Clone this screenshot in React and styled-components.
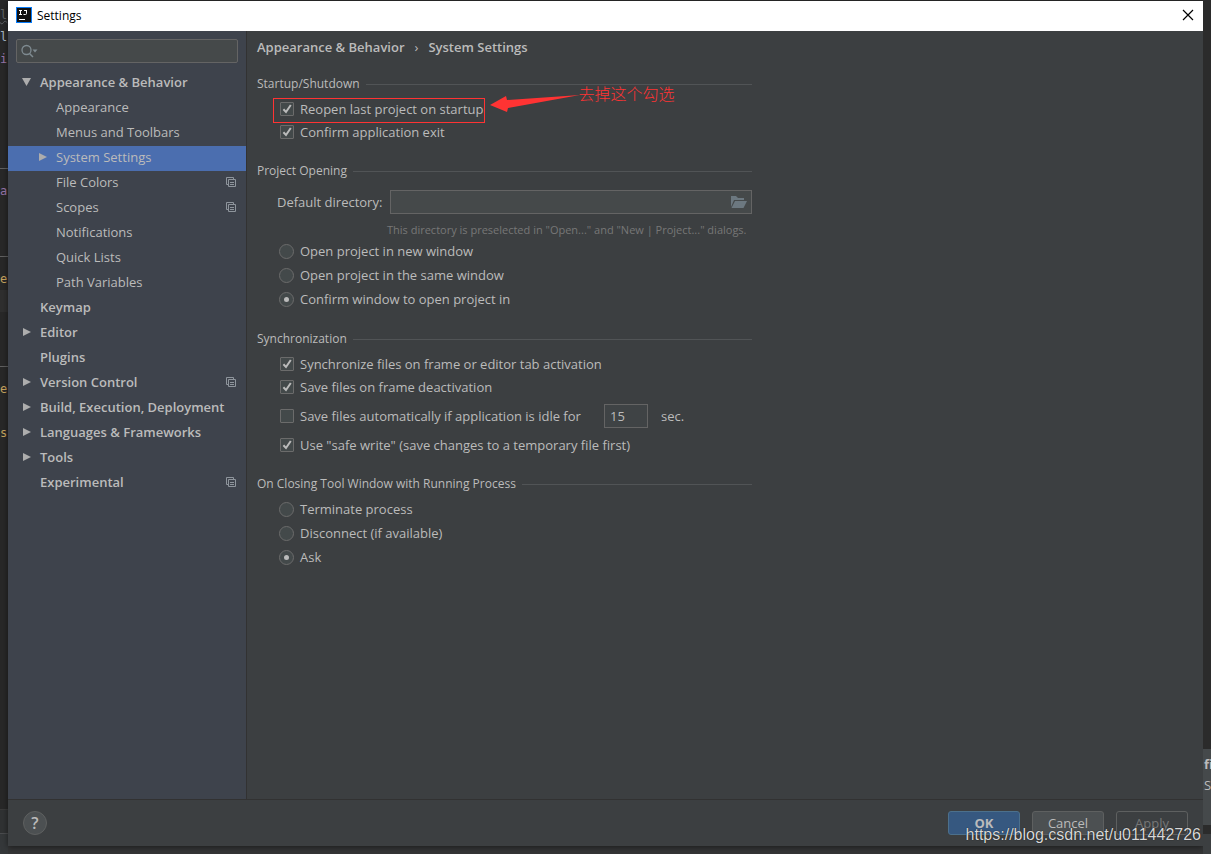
import { useState } from "react"
import styled, { createGlobalStyle, css } from "styled-components"

const editorLines = {
    0: { text: "l", color: "#606366", wavy: true },
    1: { text: "l", color: "#A9B7C6" },
    2: { text: "i", color: "#9876AA" },
    7: { separator: true },
    8: { text: "a", color: "#9876AA" },
    11: { separator: true },
    12: { text: "e", color: "#C9A55F" },
    13: { current: true },
    16: { separator: true },
    17: { text: "e", color: "#C9A55F" },
    19: { text: "s", color: "#C9A55F" }
}

const tree = [
    { name: "Appearance & Behavior", arrow: "open" },
    { name: "Appearance", child: true },
    { name: "Menus and Toolbars", child: true },
    { name: "System Settings", child: true, arrow: "closed" },
    { name: "File Colors", child: true, project: true },
    { name: "Scopes", child: true, project: true },
    { name: "Notifications", child: true },
    { name: "Quick Lists", child: true },
    { name: "Path Variables", child: true },
    { name: "Keymap" },
    { name: "Editor", arrow: "closed" },
    { name: "Plugins" },
    { name: "Version Control", arrow: "closed", project: true },
    { name: "Build, Execution, Deployment", arrow: "closed" },
    { name: "Languages & Frameworks", arrow: "closed" },
    { name: "Tools", arrow: "closed" },
    { name: "Experimental", project: true }
]

function CheckOption({ children, defaultChecked }) {
    return (
        <CheckLabel>
            <CheckBox>
                <input type="checkbox" defaultChecked={defaultChecked} />
                <svg width="14" height="14" viewBox="0 0 14 14" fill="none">
                    <path d="M3.4 7.2L6 10L10.8 3" stroke="#BBBBBB" strokeWidth="2" />
                </svg>
            </CheckBox>
            {children}
        </CheckLabel>
    )
}

function RadioGroup({ name, options, selected }) {
    return options.map(o =>
        <RadioLabel key={o}>
            <Radio type="radio" name={name} defaultChecked={o === selected} />
            {o}
        </RadioLabel>
    )
}

function Arrow({ state }) {
    return (
        <ArrowSlot>
            {state &&
                <svg width="10" height="10" viewBox="0 0 10 10" fill="#ADADAD">
                    {state === "open" ? <path d="M0 1H9L4.500 9Z" /> : <path d="M1 1V9L9 5Z" />}
                </svg>}
        </ArrowSlot>
    )
}

function ProjectIcon() {
    return (
        <svg width="10" height="10" viewBox="0 0 10 10" fill="none" stroke="#8E959C">
            <path d="M2 7.500H0.500V0.500H7.500V2" />
            <path d="M2.500 2.500H9.500V9.500H2.500Z" />
            <path d="M4 5.500H8M4 7.500H8" />
        </svg>
    )
}

export default function App() {
    const [active, setActive] = useState("System Settings");

    return (
        <Desktop>
            <GlobalStyle />
            <EditorEdge aria-hidden="true">
                {Array.from({ length: 20 }, (_, i) => {
                    const line = editorLines[i] || {};
                    return (
                        <CodeLine key={i} $color={line.color} $current={line.current} $wavy={line.wavy}>
                            {line.separator ? <hr /> : line.text}
                        </CodeLine>
                    )
                })}
                <StatusBars />
            </EditorEdge>

            <Dialog>
                <TitleBar>
                    <svg width="16" height="16" viewBox="0 0 16 16">
                        <rect width="16" height="16" fill="#087CFA" />
                        <rect x="1" y="1" width="14" height="14" fill="#111111" />
                        <path d="M3 3.500H6M4.500 3V8M3 7.500H6M8 3.500H11M10.500 3V6.500Q10.500 7.500 9.500 7.500H7.500M3 12.500H9" stroke="#FFFFFF" fill="none" />
                    </svg>
                    <h1>Settings</h1>
                    <CloseButton aria-label="Close">
                        <svg width="12" height="12" viewBox="0 0 12 12">
                            <path d="M1 1L11 11M11 1L1 11" stroke="#000000" strokeWidth="1.200" />
                        </svg>
                    </CloseButton>
                </TitleBar>

                <Body>
                    <Sidebar>
                        <Search>
                            <svg width="18" height="14" viewBox="0 0 18 14" fill="none">
                                <circle cx="5.500" cy="6" r="4.500" stroke="#7F8B91" strokeWidth="1.300" />
                                <path d="M8.500 9.500L12 13" stroke="#7F8B91" strokeWidth="1.500" />
                                <path d="M11.500 5.500H16.500L14 8.500Z" fill="#7F8B91" />
                            </svg>
                            <input type="text" aria-label="Search settings" />
                        </Search>
                        <nav>
                            {tree.map(t =>
                                <TreeRow key={t.name} $child={t.child} $active={t.name === active} onClick={() => setActive(t.name)}>
                                    <Arrow state={t.arrow} />
                                    <span>{t.name}</span>
                                    {t.project && <ProjectIcon />}
                                </TreeRow>
                            )}
                        </nav>
                    </Sidebar>

                    <Content>
                        <Breadcrumb>
                            <span>Appearance &amp; Behavior</span>
                            <i>›</i>
                            <span>System Settings</span>
                        </Breadcrumb>

                        <Section>
                            <SectionTitle>Startup/Shutdown</SectionTitle>
                            <Options>
                                <Marked>
                                    <CheckOption defaultChecked>Reopen last project on startup</CheckOption>
                                    <Note>
                                        <svg width="90" height="20" viewBox="0 0 90 20">
                                            <path d="M0 10L16 1L17 5L90 0L18 13L17 17Z" fill="#FF3333" />
                                        </svg>
                                        <span lang="zh">去掉这个勾选</span>
                                    </Note>
                                </Marked>
                                <CheckOption defaultChecked>Confirm application exit</CheckOption>
                            </Options>
                        </Section>

                        <Section>
                            <SectionTitle>Project Opening</SectionTitle>
                            <DirectoryRow>
                                <label htmlFor="directory">Default directory:</label>
                                <DirectoryField>
                                    <input id="directory" type="text" />
                                    <button aria-label="Browse">
                                        <svg width="16" height="12" viewBox="0 0 16 12" fill="#6C7880">
                                            <path d="M0 11V0H5L7 2H13V4H3Z" />
                                            <path d="M4 5H16L12.500 12H0.500Z" />
                                        </svg>
                                    </button>
                                </DirectoryField>
                            </DirectoryRow>
                            <Hint>This directory is preselected in "Open..." and "New | Project..." dialogs.</Hint>
                            <RadioGroup
                                name="opening"
                                options={["Open project in new window", "Open project in the same window", "Confirm window to open project in"]}
                                selected="Confirm window to open project in"
                            />
                        </Section>

                        <Section>
                            <SectionTitle>Synchronization</SectionTitle>
                            <Options>
                                <CheckOption defaultChecked>Synchronize files on frame or editor tab activation</CheckOption>
                                <CheckOption defaultChecked>Save files on frame deactivation</CheckOption>
                                <IdleRow>
                                    <CheckOption>Save files automatically if application is idle for</CheckOption>
                                    <input type="text" defaultValue="15" aria-label="Idle seconds" />
                                    <span>sec.</span>
                                </IdleRow>
                                <CheckOption defaultChecked>Use "safe write" (save changes to a temporary file first)</CheckOption>
                            </Options>
                        </Section>

                        <Section>
                            <SectionTitle>On Closing Tool Window with Running Process</SectionTitle>
                            <Options>
                                <RadioGroup
                                    name="closing"
                                    options={["Terminate process", "Disconnect (if available)", "Ask"]}
                                    selected="Ask"
                                />
                            </Options>
                        </Section>
                    </Content>
                </Body>

                <Footer>
                    <HelpButton aria-label="Help">?</HelpButton>
                    <Button $kind="primary">OK</Button>
                    <Button>Cancel</Button>
                    <Button $kind="disabled" disabled>Apply</Button>
                </Footer>
            </Dialog>

            <RightEdge aria-hidden="true">
                <Balloon>
                    <b>fi</b>
                    <span>S</span>
                </Balloon>
                <RightStatus />
            </RightEdge>
            <Watermark>https://blog.csdn.net/u011442726</Watermark>
        </Desktop>
    )
}

const GlobalStyle = createGlobalStyle`
    * {
        box-sizing: border-box;
    }
    body {
        margin: 0;
        background-color: #2B2B2B;
    }
    body, input, button {
        font-family: "Open Sans", "Noto Sans CJK SC", sans-serif;
        font-size: 13px;
        color: #BBBBBB;
    }
    button {
        border: none;
        padding: 0;
        background: none;
        cursor: pointer;
    }
    svg {
        flex-shrink: 0;
    }
`

const Desktop = styled.div`
    position: relative;
    display: grid;
    grid-template-columns: 8px minmax(0, 1fr) 8px;
    min-height: 100vh;
    background: linear-gradient(to top, #343536 8px, #2B2B2B 8px);
`

const EditorEdge = styled.div`
    display: flex;
    flex-direction: column;
    overflow: hidden;
    padding-top: 4px;
    background-color: #282828;
`

const CodeLine = styled.div`
    height: 22px;
    flex-shrink: 0;
    font-family: "DejaVu Sans Mono", monospace;
    font-size: 12px;
    line-height: 22px;
    color: ${props => props.$color};
    background-color: ${props => props.$current ? "#2F2F2F" : "transparent"};
    text-decoration: ${props => props.$wavy ? "underline wavy 1px" : "none"};
    hr {
        margin: 10px 0 0;
        border: none;
        border-top: 1px solid #606060;
    }
`

const StatusBars = styled.div`
    height: 45px;
    flex-shrink: 0;
    margin-top: auto;
    border-top: 1px solid #3A3A3A;
    background: linear-gradient(#303233 23px, #4A4C4E 23px, #4A4C4E 24px, #35383A 24px);
`

const Dialog = styled.main`
    display: flex;
    flex-direction: column;
    margin: 1px 0 8px;
    background-color: #3C3F41;
    box-shadow: 0 1px 6px rgba(0, 0, 0, 0.5);
`

const TitleBar = styled.header`
    display: flex;
    align-items: center;
    height: 30px;
    padding: 0 9px 2px 8px;
    background-color: #FFFFFF;
    h1 {
        flex: 1;
        margin: 0 0 0 5px;
        font-size: 12px;
        font-weight: 400;
        color: #000000;
    }
`

const CloseButton = styled.button`
    display: flex;
`

const Body = styled.div`
    display: flex;
    flex: 1;
`

const Sidebar = styled.aside`
    width: 239px;
    flex-shrink: 0;
    border-right: 1px solid #323232;
    background-color: #3E434C;
`

const Search = styled.label`
    display: flex;
    align-items: center;
    height: 24px;
    margin: 8px;
    padding-left: 4px;
    border: 1px solid #646464;
    border-radius: 2px;
    background-color: #45494A;
    input {
        flex: 1;
        min-width: 0;
        border: none;
        outline: none;
        background: none;
    }
`

const TreeRow = styled.button`
    display: flex;
    align-items: center;
    width: 100%;
    height: 25px;
    padding: 0 10px 3px ${props => props.$child ? "30px" : "14px"};
    font-weight: ${props => props.$child ? 400 : 600};
    text-align: left;
    white-space: nowrap;
    background-color: ${props => props.$active ? "#4B6EAF" : "transparent"};
    span {
        flex: 1;
    }
`

const ArrowSlot = styled.i`
    display: flex;
    width: 18px;
`

const Content = styled.div`
    flex: 1;
    min-width: 0;
    padding: 7px 10px;
`

const Breadcrumb = styled.h2`
    display: flex;
    gap: 10px;
    margin: 0;
    font-size: 13px;
    font-weight: 600;
    line-height: 18px;
    i {
        font-style: normal;
        font-weight: 400;
    }
`

const Section = styled.section`
    max-width: 495px;
    margin-top: 19px;
`

const SectionTitle = styled.h3`
    display: flex;
    align-items: center;
    gap: 6px;
    margin: 0;
    font-size: 12px;
    font-weight: 400;
    line-height: 18px;
    white-space: nowrap;
    &::after {
        content: "";
        flex: 1;
        height: 1px;
        background-color: #515456;
    }
`

const Options = styled.div`
    padding-top: 4px;
`

const CheckLabel = styled.label`
    display: flex;
    align-items: center;
    gap: 6px;
    height: 23px;
    padding-left: 23px;
    white-space: nowrap;
`

const CheckBox = styled.span`
    display: grid;
    input, svg {
        grid-area: 1 / 1;
    }
    input {
        appearance: none;
        width: 14px;
        height: 14px;
        margin: 0;
        border: 1px solid #6B6B6B;
        border-radius: 1px;
        background-color: #43494A;
    }
    svg {
        pointer-events: none;
    }
    input:not(:checked) + svg {
        visibility: hidden;
    }
`

const RadioLabel = styled.label`
    display: flex;
    align-items: center;
    gap: 6px;
    height: 24px;
    padding-left: 22px;
    white-space: nowrap;
`

const Radio = styled.input`
    appearance: none;
    display: grid;
    place-items: center;
    width: 15px;
    height: 15px;
    margin: 0;
    border: 1px solid #6B6B6B;
    border-radius: 50%;
    background-color: #43494A;
    &:checked::before {
        content: "";
        width: 5px;
        height: 5px;
        border-radius: 50%;
        background-color: #BBBBBB;
    }
`

const Marked = styled.div`
    position: relative;
    width: fit-content;
    &::before {
        content: "";
        position: absolute;
        inset: 1px -2px -3px 16px;
        border: 1px solid #FF3333;
        pointer-events: none;
    }
`

const Note = styled.div`
    position: absolute;
    left: 100%;
    top: -16px;
    display: flex;
    align-items: flex-end;
    margin-left: 7px;
    color: #FF3333;
    white-space: nowrap;
    svg {
        margin-bottom: -10px;
    }
    span {
        margin-left: -2px;
        font-family: "Noto Sans CJK SC", sans-serif;
        font-size: 16px;
        font-weight: 300;
        line-height: 24px;
    }
`

const field = css`
    height: 24px;
    border: 1px solid #646464;
    background-color: #45494A;
`

const DirectoryRow = styled.div`
    display: flex;
    align-items: center;
    padding: 10px 0 7px 20px;
    label {
        width: 113px;
    }
`

const DirectoryField = styled.div`
    ${field}
    display: flex;
    flex: 1;
    padding-right: 4px;
    input {
        flex: 1;
        min-width: 0;
        border: none;
        outline: none;
        background: none;
    }
    button {
        display: flex;
        align-items: center;
    }
`

const Hint = styled.p`
    margin: 0;
    padding-left: 130px;
    font-size: 11px;
    line-height: 18px;
    color: #777777;
    white-space: nowrap;
`

const IdleRow = styled.div`
    display: flex;
    align-items: center;
    margin: 6px 0 5px;
    label {
        min-width: 347px;
    }
    input[type="text"] {
        ${field}
        width: 44px;
        margin-right: 13px;
        padding: 0 5px;
        background-color: #3F4345;
    }
`

const Footer = styled.footer`
    display: flex;
    gap: 12px;
    padding: 11px 15px;
    border-top: 1px solid #323232;
`

const HelpButton = styled.button`
    width: 24px;
    height: 24px;
    margin-right: auto;
    border: 1px solid #5E6060;
    border-radius: 50%;
    font-size: 16px;
    font-weight: 600;
    line-height: 22px;
    background-color: #4C5052;
`

const Button = styled.button`
    width: 72px;
    height: 24px;
    border: 1px solid ${props => props.$kind === "primary" ? "#4C708C" : "#5E6060"};
    border-radius: 3px;
    font-weight: ${props => props.$kind === "primary" ? 700 : 400};
    color: ${props => props.$kind === "disabled" ? "#777777" : "#BBBBBB"};
    background-color: ${props => props.$kind === "primary" ? "#365880" : props.$kind === "disabled" ? "transparent" : "#4C5052"};
`

const RightEdge = styled.div`
    display: flex;
    flex-direction: column;
    justify-content: flex-end;
    overflow: hidden;
    background-color: #2B2B2B;
`

const Balloon = styled.div`
    display: flex;
    flex-direction: column;
    height: 76px;
    padding: 5px 0 0 1px;
    line-height: 21px;
    background-color: #45494B;
`

const RightStatus = styled.div`
    height: 29px;
    border-top: 9px solid #2B2B2B;
    background-color: #3C3F41;
`

const Watermark = styled.div`
    position: absolute;
    right: 10px;
    bottom: 9px;
    font-family: "Liberation Sans", sans-serif;
    font-size: 16px;
    line-height: 20px;
    color: #D8D8D8;
    text-shadow: 0 0 1px #000000;
    pointer-events: none;
`
